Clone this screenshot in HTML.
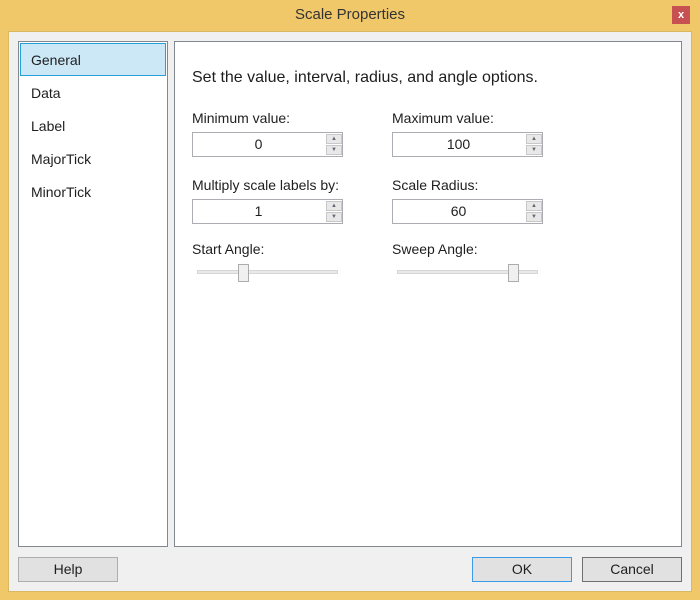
<!DOCTYPE html>
<html><head><style>
*{margin:0;padding:0;box-sizing:border-box}
body{width:700px;height:600px;background:#f0c86a;font-family:"Liberation Sans",sans-serif;font-size:14px;color:#1e1e1e;position:relative;overflow:hidden}
.a{position:absolute}
.title{left:0;top:6px;width:700px;text-align:center;font-size:15px;color:#333}
.close{left:672px;top:6px;width:18px;height:18px;background:#c75050;color:#fff;font-size:11px;font-weight:bold;text-align:center;line-height:18px}
.client{left:8px;top:31px;width:684px;height:561px;background:#f0f0f0;border:1px solid #d8b860}
.list{left:18px;top:41px;width:150px;height:506px;background:#fff;border:1px solid #828790}
.sel{left:20px;top:43px;width:146px;height:33px;background:#cce8f6;border:1px solid #26a0da}
.item{left:31px}
.panel{left:174px;top:41px;width:508px;height:506px;background:#fff;border:1px solid #828790}
.spin{width:151px;height:25px;border:1px solid #abadb3;background:#fff;text-align:center;line-height:23px;padding-right:18px}
.arr{width:16px;height:10px;background:#e8e8e8;border:1px solid #c8c8c8;font-size:6px;line-height:8px;text-align:center;color:#667}
.track{width:141px;height:4px;background:#e7eaea;border:1px solid #d6d6d6}
.thumb{width:11px;height:18px;background:#f0f0f0;border:1px solid #acacac}
.btn{width:100px;height:25px;background:#e1e1e1;border:1px solid #adadad;text-align:center;line-height:23px}
</style></head><body>
<div class="a title">Scale Properties</div>
<div class="a close">x</div>
<div class="a client"></div>
<div class="a list"></div>
<div class="a sel"></div>
<div class="a item" style="top:52px">General</div>
<div class="a item" style="top:85px">Data</div>
<div class="a item" style="top:118px">Label</div>
<div class="a item" style="top:151px">MajorTick</div>
<div class="a item" style="top:184px">MinorTick</div>
<div class="a panel"></div>
<div class="a" style="left:192px;top:69px;font-size:16px">Set the value, interval, radius, and angle options.</div>
<div class="a" style="left:192px;top:110px">Minimum value:</div>
<div class="a" style="left:392px;top:110px">Maximum value:</div>
<div class="a spin" style="left:192px;top:132px">0</div>
<div class="a spin" style="left:392px;top:132px">100</div>
<div class="a" style="left:192px;top:177px">Multiply scale labels by:</div>
<div class="a" style="left:392px;top:177px">Scale Radius:</div>
<div class="a spin" style="left:192px;top:199px">1</div>
<div class="a spin" style="left:392px;top:199px">60</div>
<div class="a arr" style="left:326px;top:134px">▲</div><div class="a arr" style="left:326px;top:145px">▼</div>
<div class="a arr" style="left:526px;top:134px">▲</div><div class="a arr" style="left:526px;top:145px">▼</div>
<div class="a arr" style="left:326px;top:201px">▲</div><div class="a arr" style="left:326px;top:212px">▼</div>
<div class="a arr" style="left:526px;top:201px">▲</div><div class="a arr" style="left:526px;top:212px">▼</div>
<div class="a" style="left:192px;top:241px">Start Angle:</div>
<div class="a" style="left:392px;top:241px">Sweep Angle:</div>
<div class="a track" style="left:197px;top:270px"></div>
<div class="a track" style="left:397px;top:270px"></div>
<div class="a thumb" style="left:238px;top:264px"></div>
<div class="a thumb" style="left:508px;top:264px"></div>
<div class="a btn" style="left:18px;top:557px">Help</div>
<div class="a btn" style="left:472px;top:557px;border-color:#3c9ae6">OK</div>
<div class="a btn" style="left:582px;top:557px;border-color:#707070">Cancel</div>
</body></html>
